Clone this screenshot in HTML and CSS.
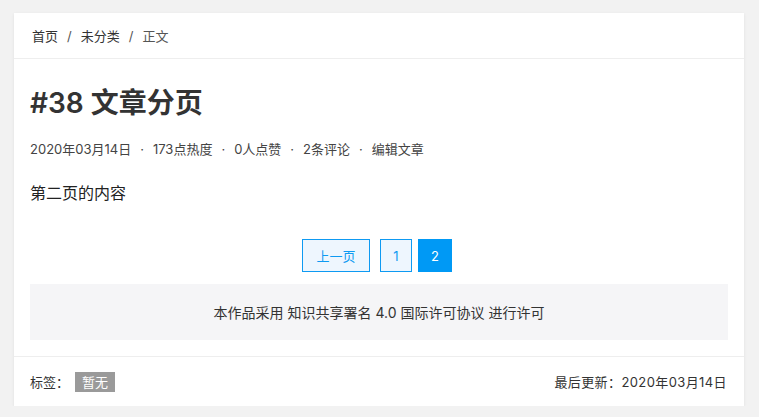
FILE: index.html
```html
<!DOCTYPE html>
<html lang="zh">
<head>
<meta charset="utf-8">
<link rel="stylesheet" href="styles.css">
</head>
<body>
<div class="card">
  <div class="crumbs">
    <a class="crumb">首页</a><span class="sep">/</span><a class="crumb">未分类</a><span class="sep">/</span><span class="crumb current">正文</span>
  </div>
  <div class="main">
    <h1 class="title">#38 文章分页</h1>
    <div class="meta">
      <span>2020年03月14日</span><span class="dot">·</span><span>173点热度</span><span class="dot">·</span><span>0人点赞</span><span class="dot">·</span><span>2条评论</span><span class="dot">·</span><span>编辑文章</span>
    </div>
    <p class="content">第二页的内容</p>
    <div class="pager">
      <a class="pg prev">上一页</a>
      <a class="pg num">1</a>
      <span class="pg num active">2</span>
    </div>
    <div class="license">本作品采用 知识共享署名 4.0 国际许可协议 进行许可</div>
  </div>
  <div class="foot">
    <div class="tags">标签：<span class="tag">暂无</span></div>
    <div class="updated">最后更新：2020年03月14日</div>
  </div>
</div>
</body>
</html>
```
FILE: styles.css
```css
html, body {
  margin: 0;
  padding: 0;
  background: #f2f2f2;
}
body {
  padding: 13px 15px 0 14px;
  font-family: Inter, "Noto Sans CJK SC", sans-serif;
  color: #333;
}
.card {
  background: #fff;
  box-shadow: 0 1px 3px rgba(0,0,0,0.08);
}
.crumbs {
  height: 46px;
  box-sizing: border-box;
  border-bottom: 1px solid #eee;
  display: flex;
  align-items: center;
  padding-left: 18px;
  font-size: 13px;
  color: #333;
}
.sep {
  margin: 0 9px;
  color: #555;
}
.crumb.current {
  color: #555;
}
.main {
  padding: 24px 16px 16px 16px;
}
.title {
  margin: 0;
  font-size: 28px;
  line-height: 40px;
  font-weight: 600;
  color: #333;
}
.meta {
  margin-top: 16px;
  font-size: 13px;
  line-height: 20px;
  color: #444;
}
.dot {
  margin: 0 9px;
}
.content {
  margin: 23px 0 0 0;
  font-size: 16px;
  line-height: 22px;
  color: #222;
}
.pager {
  margin-top: 35px;
  padding-right: 4px;
  display: flex;
  justify-content: center;
  gap: 6px;
  font-size: 13px;
}
.pg {
  height: 33px;
  box-sizing: border-box;
  display: flex;
  align-items: center;
  justify-content: center;
  border: 1px solid #0e9af2;
  color: #0e9af2;
  background: #eef6fe;
}
.prev {
  width: 68px;
  margin-right: 4px;
}
.num {
  width: 32px;
}
.active {
  width: 34px;
  background: #0099f5;
  border-color: #0099f5;
  color: #fff;
}
.license {
  margin-top: 12px;
  height: 56px;
  display: flex;
  align-items: center;
  justify-content: center;
  background: #f5f5f7;
  font-size: 14px;
  color: #333;
}
.foot {
  border-top: 1px solid #eee;
  height: 49px;
  display: flex;
  align-items: center;
  justify-content: space-between;
  padding: 0 17px 0 16px;
  font-size: 13px;
  color: #333;
}
.tag {
  display: inline-block;
  margin-left: 6px;
  padding: 0 7px;
  height: 20px;
  line-height: 20px;
  background: #9a9a9a;
  color: #fff;
}
.updated {
  letter-spacing: 0.4px;
}
```
